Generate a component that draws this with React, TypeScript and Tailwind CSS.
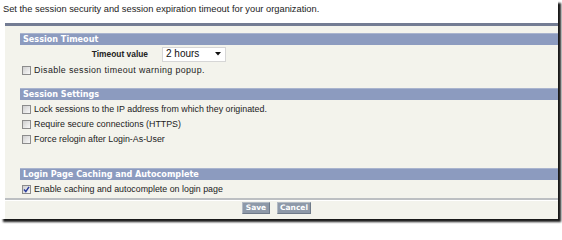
import React from "react";

const Check = ({ checked }: { checked?: boolean }) => (
  <span className="relative inline-block w-[9px] h-[9px] shrink-0 border border-[#8c8c8c] bg-linear-to-br from-[#cfcfcf] to-[#f9f9f9]">
    {checked && (
      <svg viewBox="0 0 9 9" className="absolute left-[-1px] top-[-1px] w-[9px] h-[9px]">
        <path d="M2 4.6 L3.8 6.6 L7 1.8" fill="none" stroke="#2a3c9c" strokeWidth="1.5" />
      </svg>
    )}
  </span>
);

const Row = ({ label, checked, cls, track }: { label: string; checked?: boolean; cls: string; track?: string }) => (
  <div className={`flex items-center gap-[3px] pl-[17px] ${cls}`}>
    <Check checked={checked} />
    <span className={`text-[8.85px] leading-none text-[#1c1c1c] ${track ?? ""}`}>{label}</span>
  </div>
);

const Header = ({ title, cls }: { title: string; cls: string }) => (
  <div
    className={`ml-[15px] h-[12px] bg-[#8c9bbf] border-t border-[#a9b4ce] pl-[3px] flex items-center text-white font-bold text-[8.1px] leading-none ${cls}`}
    style={{ fontFamily: '"DejaVu Sans", Verdana, sans-serif' }}
  >
    {title}
  </div>
);

export default function App() {
  return (
    <div className="w-[562px] h-[224px] bg-white overflow-hidden" style={{ fontFamily: '"Liberation Sans", Arial, sans-serif' }}>
      <div className="w-[558px] h-[219px] bg-white flex flex-col shadow-[3px_3px_2px_rgba(0,0,0,0.9)]">
        <div className="h-[23px] pl-[3px] pt-[5px] text-[9.3px] leading-none text-[#1c1c1c]">
          Set the session security and session expiration timeout for your organization.
        </div>
        <div className="ml-[5px] flex-1 flex flex-col border-t-[3px] border-[#737c93] bg-[#f3f3ec]">
          <Header title="Session Timeout" cls="mt-[7px]" />
          <div className="mt-[1px] h-[16px] flex items-center">
            <div className="w-[143px] text-right font-bold text-[8.4px] leading-none text-[#222]">Timeout value</div>
            <div className="ml-[14px] w-[64px] h-[15px] bg-white border border-[#d6d6d6] flex items-center pl-[3px] pr-[4px] justify-between">
              <span className="text-[10px] leading-none text-[#111]">2 hours</span>
              <svg viewBox="0 0 6 4" className="w-[6px] h-[4px]">
                <path d="M0 0 H6 L3 3.5 Z" fill="#111" />
              </svg>
            </div>
          </div>
          <Row label="Disable session timeout warning popup." cls="mt-[1px] h-[14px]" track="tracking-[0.38px]" />

          <Header title="Session Settings" cls="mt-[11px]" />
          <Row label="Lock sessions to the IP address from which they originated." cls="mt-[2px] h-[15px]" />
          <Row label="Require secure connections (HTTPS)" cls="h-[15px]" />
          <Row label="Force relogin after Login-As-User" cls="h-[15px]" />

          <Header title="Login Page Caching and Autocomplete" cls="mt-[21px]" />
          <Row label="Enable caching and autocomplete on login page" checked cls="mt-[1px] h-[16px]" />

          <div className="mt-[1px] border-t-2 border-[#bcbfc2]" />
          <div className="border-t border-white" />
          <div className="mt-[1px] flex gap-[7px] pl-[237px]" style={{ fontFamily: '"DejaVu Sans", Verdana, sans-serif' }}>
            <div className="w-[28px] h-[12px] bg-[#8e99a8] border border-t-[#b3bac4] border-l-[#b3bac4] border-r-[#6f7a89] border-b-[#6f7a89] flex items-center justify-center text-white font-bold text-[7.5px] leading-none">
              Save
            </div>
            <div className="w-[34px] h-[12px] bg-[#8e99a8] border border-t-[#b3bac4] border-l-[#b3bac4] border-r-[#6f7a89] border-b-[#6f7a89] flex items-center justify-center text-white font-bold text-[7.5px] leading-none">
              Cancel
            </div>
          </div>
        </div>
      </div>
    </div>
  );
}
